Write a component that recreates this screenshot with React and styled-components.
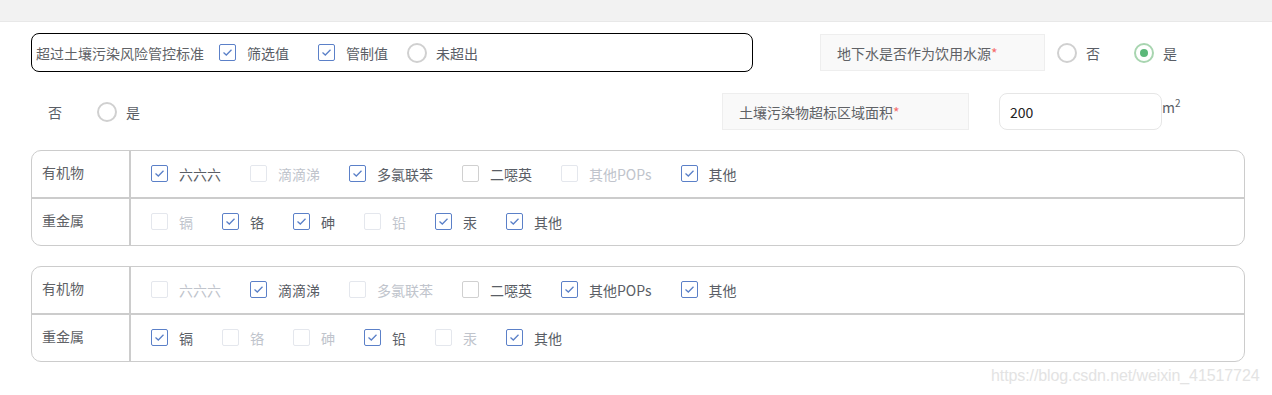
import React from "react";
import styled, { createGlobalStyle } from "styled-components";

const GlobalStyle = createGlobalStyle`
    body {
        margin: 0;
        background: #fff;
        font-family: "Microsoft YaHei", "Noto Sans CJK SC", "Liberation Sans", sans-serif;
        font-size: 14px;
        color: #606266;
    }
`;

const Page = styled.div`
    position: relative;
    width: 1272px;
    height: 395px;
    overflow: hidden;
`;

const TopBar = styled.div`
    height: 21px;
    background: #f2f2f2;
    border-bottom: 1px solid #e8e8e8;
`;

const Content = styled.div`
    padding: 11px 0 0 31px;
`;

const Row = styled.div`
    display: flex;
    align-items: center;
    height: ${(p) => p.h || 39}px;
    margin-bottom: ${(p) => p.mb || 0}px;
`;

const StandardBox = styled.div`
    display: flex;
    align-items: center;
    box-sizing: border-box;
    width: 722px;
    height: 39px;
    border: 1px solid #000;
    border-radius: 8px;
    padding-left: 4px;
`;

const Title = styled.span`
    margin-right: 15px;
    white-space: nowrap;
`;

const FieldLabel = styled.div`
    display: flex;
    align-items: center;
    box-sizing: border-box;
    width: ${(p) => p.w}px;
    height: 37px;
    margin-left: ${(p) => p.ml || 0}px;
    padding-left: 16px;
    background: #f9f9f9;
    border: 1px solid #eee;
    color: #606266;
`;

const Star = styled.span`
    color: #f56c6c;
`;

const Check = styled.label`
    display: inline-flex;
    align-items: center;
    margin-right: ${(p) => (p.mr === undefined ? 29 : p.mr)}px;
    color: ${(p) => (p.disabled ? "#c0c4cc" : "#5a5e66")};
    white-space: nowrap;
`;

const Box = styled.span`
    box-sizing: border-box;
    width: 17px;
    height: 17px;
    margin-right: 11px;
    border: 1px solid ${(p) => (p.on ? "#5b80c8" : p.disabled ? "#e4e7ed" : "#d0d0d0")};
    border-radius: 2px;
    background: #fff;
    display: flex;
    align-items: center;
    justify-content: center;
`;

const Radio = styled.label`
    display: inline-flex;
    align-items: center;
    margin-left: ${(p) => p.ml || 0}px;
    color: #5a5e66;
`;

const Circle = styled.span`
    box-sizing: border-box;
    width: 20px;
    height: 20px;
    margin-right: 9px;
    border-radius: 50%;
    border: 2px solid ${(p) => (p.on ? "#a8d5b0" : "#d0d0d0")};
    display: flex;
    align-items: center;
    justify-content: center;
    &::after {
        content: "";
        display: ${(p) => (p.on ? "block" : "none")};
        width: 8px;
        height: 8px;
        border-radius: 50%;
        background: #5cb87a;
    }
`;

const Plain = styled.span`
    margin-left: ${(p) => p.ml || 0}px;
    color: #5a5e66;
`;

const Input = styled.input`
    box-sizing: border-box;
    width: 163px;
    height: 37px;
    margin-left: 30px;
    padding: 0 10px;
    border: 1px solid #e6e6e6;
    border-radius: 8px;
    font: inherit;
    color: #222;
    outline: none;
`;

const Unit = styled.span`
    align-self: flex-start;
    margin-top: 2px;
    color: #5a5e66;
    font-size: 14px;
    sup {
        font-size: 10px;
    }
`;

const Table = styled.div`
    box-sizing: border-box;
    width: 1214px;
    margin-top: 20px;
    border: 1px solid #ccc;
    border-radius: 10px;
    overflow: hidden;
`;

const TRow = styled.div`
    display: flex;
    height: 46px;
    & + & {
        border-top: 2px solid #ccc;
    }
`;

const TLabel = styled.div`
    box-sizing: border-box;
    width: 99px;
    padding: 11px 0 0 10px;
    border-right: 2px solid #ccc;
    color: #606266;
`;

const TCell = styled.div`
    display: flex;
    align-items: center;
    padding-left: 20px;
    padding-bottom: 1px;
`;

const Watermark = styled.div`
    position: absolute;
    left: 991px;
    top: 367px;
    font-family: "Liberation Sans", Arial, sans-serif;
    font-size: 16px;
    color: #e3e3e3;
    letter-spacing: -0.1px;
`;

const Tick = () => (
    <svg width="11" height="9" viewBox="0 0 11 9">
        <path d="M1.5 4.5 L4.3 7 L9.5 1.8" fill="none" stroke="#5b80c8" strokeWidth="1.3" />
    </svg>
);

const CheckItem = ({ text, on, disabled, mr }) => (
    <Check disabled={disabled} mr={mr}>
        <Box on={on} disabled={disabled}>{on && <Tick />}</Box>
        {text}
    </Check>
);

const RadioItem = ({ text, on, ml }) => (
    <Radio ml={ml}>
        <Circle on={on} />
        {text}
    </Radio>
);

const tables = [
    {
        organic: [
            ["六六六", 1], ["滴滴涕", 0, 1], ["多氯联苯", 1], ["二噁英", 0], ["其他POPs", 0, 1], ["其他", 1],
        ],
        metal: [
            ["镉", 0, 1], ["铬", 1], ["砷", 1], ["铅", 0, 1], ["汞", 1], ["其他", 1],
        ],
    },
    {
        organic: [
            ["六六六", 0, 1], ["滴滴涕", 1], ["多氯联苯", 0, 1], ["二噁英", 0], ["其他POPs", 1], ["其他", 1],
        ],
        metal: [
            ["镉", 1], ["铬", 0, 1], ["砷", 0, 1], ["铅", 1], ["汞", 0, 1], ["其他", 1],
        ],
    },
];

const Items = ({ list }) =>
    list.map(([text, on, disabled]) => (
        <CheckItem key={text} text={text} on={!!on} disabled={!!disabled} />
    ));

export default function App() {
    return (
        <Page>
            <GlobalStyle />
            <TopBar />
            <Content>
                <Row h={39} mb={21}>
                    <StandardBox>
                        <Title>超过土壤污染风险管控标准</Title>
                        <CheckItem text="筛选值" on />
                        <CheckItem text="管制值" on mr={19} />
                        <RadioItem text="未超出" />
                    </StandardBox>
                    <FieldLabel w={225} ml={67}>
                        地下水是否作为饮用水源<Star>*</Star>
                    </FieldLabel>
                    <RadioItem text="否" ml={12} />
                    <RadioItem text="是" on ml={34} />
                </Row>
                <Row h={37}>
                    <Plain ml={17}>否</Plain>
                    <RadioItem text="是" ml={35} />
                    <FieldLabel w={247} ml={582}>
                        土壤污染物超标区域面积<Star>*</Star>
                    </FieldLabel>
                    <Input defaultValue="200" />
                    <Unit>
                        m<sup>2</sup>
                    </Unit>
                </Row>
                {tables.map((t, i) => (
                    <Table key={i}>
                        <TRow>
                            <TLabel>有机物</TLabel>
                            <TCell>
                                <Items list={t.organic} />
                            </TCell>
                        </TRow>
                        <TRow>
                            <TLabel>重金属</TLabel>
                            <TCell>
                                <Items list={t.metal} />
                            </TCell>
                        </TRow>
                    </Table>
                ))}
            </Content>
            <Watermark>https://blog.csdn.net/weixin_41517724</Watermark>
        </Page>
    );
}
